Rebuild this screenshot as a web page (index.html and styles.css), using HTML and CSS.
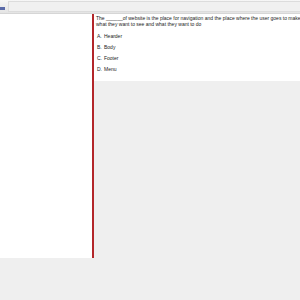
FILE: index.html
```html
<!DOCTYPE html>
<html lang="en">
  <head>
    <meta charset="UTF-8" />
    <meta name="viewport" content="width=device-width, initial-scale=1.0" />
    <title>Quiz</title>
    <link rel="stylesheet" href="styles.css">
  </head>

  <body>
    <div class="toolbar">
      <span class="icon"></span>
      <div class="address"></div>
    </div>
    <div class="main">
      <div class="sidebar"></div>
      <div class="divider"></div>
      <div class="content">
        <div class="question">
          <p class="text">The ______of website is the place for navigation and the place where the user goes to make decisions about<br>what they want to see and what they want to do</p>
          <ul class="options">
            <li><span class="letter">A.</span>Hearder</li>
            <li><span class="letter">B.</span>Body</li>
            <li><span class="letter">C.</span>Footer</li>
            <li><span class="letter">D.</span>Menu</li>
          </ul>
        </div>
      </div>
    </div>
  </body>
</html>
```
FILE: styles.css
```css
body {
  font-family: "Liberation Sans", Arial, sans-serif;
  margin: 0;
  padding: 0;
  background-color: #efefef;
  overflow: hidden;
}

.toolbar {
  display: flex;
  align-items: center;
  height: 14px;
  box-sizing: border-box;
  background: linear-gradient(#f6f6f6, #e4e4e4);
  border-bottom: 1px solid #d6d6d6;
}

.icon {
  width: 5px;
  height: 3px;
  margin: 4px 3px 0 0;
  background-color: #5a6aa8;
}

.address {
  flex: 1;
  height: 9px;
  background-color: #f0f0f0;
  border: 1px solid #dcdcdc;
  border-right: none;
}

.main {
  display: flex;
  height: 244px;
}

.sidebar {
  width: 92px;
  background-color: #fff;
}

.divider {
  width: 2px;
  background-color: #b3262a;
}

.content {
  flex: 1;
  overflow: hidden;
}

.question {
  background-color: #fff;
  padding: 1px 0 6px 2px;
  font-size: 5px;
  color: #222;
}

.text {
  margin: 0;
  line-height: 6.2px;
  white-space: nowrap;
}

.options {
  list-style: none;
  margin: 4px 0 0 1px;
  padding: 0;
}

.options li {
  height: 11px;
  line-height: 11px;
}

.letter {
  display: inline-block;
  width: 7px;
}
```
